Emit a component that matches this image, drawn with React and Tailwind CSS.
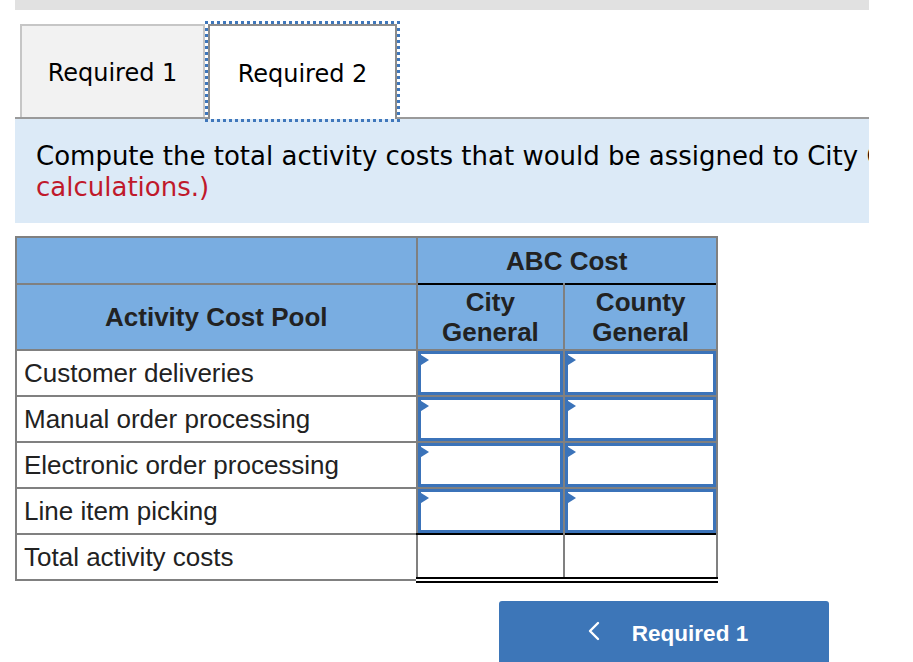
import React from 'react';

const rows = [
  'Customer deliveries',
  'Manual order processing',
  'Electronic order processing',
  'Line item picking',
];

const verdana = { fontFamily: '"DejaVu Sans", Verdana, sans-serif' };
const arial = { fontFamily: '"Liberation Sans", Arial, sans-serif' };

function InputCell() {
  return (
    <td className="p-0 border-2 border-[#808080] h-[46px]">
      <div className="relative h-[44px] border-[3px] border-[#3b73b9] bg-white">
        <svg className="absolute -left-[3px] -top-[1px]" width="11" height="14" viewBox="0 0 11 14">
          <polygon points="0,0 11,7 0,14" fill="#3b73b9" />
        </svg>
      </div>
    </td>
  );
}

export default function App() {
  return (
    <div className="w-[913px] h-[662px] overflow-hidden bg-white">
      <div className="ml-[15px] w-[854px]">
        {/* top bar */}
        <div className="h-[10px] bg-[#e1e1e1]" />

        {/* tabs */}
        <div className="flex items-end h-[109px] border-b-2 border-[#9a9a9a]" style={verdana}>
          <div className="ml-[5px] w-[185px] h-[93px] pt-[3px] bg-[#f2f2f2] border-2 border-b-0 border-[#c6c6c6] flex items-center justify-center text-[24px] text-black">
            Required 1
          </div>
          <div className="ml-[3px] -mb-[2px] w-[189px] h-[95px] pt-[3px] bg-white border-2 border-b-0 border-[#8c8c8c] outline-[3px] outline-dotted outline-[#3f77bb] flex items-center justify-center text-[24px] text-black">
            Required 2
          </div>
        </div>

        {/* instructions */}
        <div className="h-[104px] bg-[#dceaf7] overflow-hidden pl-[21px] pt-[22px]" style={verdana}>
          <p className="w-[1400px] whitespace-nowrap text-[26px] leading-[31px] text-black">
            Compute the total activity costs that would be assigned to City General and County General.{' '}
            <span className="text-[#c0192b]">(Do not round intermediate</span>
            <br />
            <span className="text-[#c0192b]">calculations.)</span>
          </p>
        </div>

        {/* table */}
        <table className="mt-[13px] border-collapse w-[703px] text-[26px] text-[#222]" style={arial}>
          <colgroup>
            <col className="w-[402px]" />
            <col className="w-[148px]" />
            <col className="w-[153px]" />
          </colgroup>
          <thead>
            <tr className="h-[47px] bg-[#79ade1]">
              <th className="border-2 border-[#808080]" />
              <th colSpan={2} className="border-2 border-b-0 border-[#808080] font-bold text-center leading-[28px] pt-[1px]">
                ABC Cost
              </th>
            </tr>
            <tr className="h-[66px] bg-[#79ade1]">
              <th className="border-2 border-[#808080] font-bold text-center">Activity Cost Pool</th>
              <th className="border-2 border-[#808080] border-t-black border-t-[2px] font-bold text-center leading-[30px]">
                City<br />General
              </th>
              <th className="border-2 border-[#808080] border-t-black border-t-[2px] font-bold text-center leading-[30px]">
                County<br />General
              </th>
            </tr>
          </thead>
          <tbody>
            {rows.map((r) => (
              <tr key={r} className="h-[46px]">
                <td className="border-2 border-[#808080] pl-[7px] pt-[1px]">{r}</td>
                <InputCell />
                <InputCell />
              </tr>
            ))}
            <tr className="h-[46px]">
              <td className="border-2 border-[#808080] pl-[7px] pt-[1px]">Total activity costs</td>
              <td className="border-2 border-[#808080] border-t-black border-b-[6px] border-b-black border-double" />
              <td className="border-2 border-[#808080] border-t-black border-b-[6px] border-b-black border-double" />
            </tr>
          </tbody>
        </table>

        {/* nav button */}
        <div className="mt-[18px] pl-[484px] flex">
          <button
            className="w-[330px] h-[70px] bg-[#3d76b8] rounded-t-[3px] flex items-start justify-center pt-[16px] pl-[8px] text-white text-[22.5px] font-bold"
            style={arial}
          >
            <svg className="mt-[4px] mr-[32px]" width="12" height="20" viewBox="0 0 12 20">
              <polyline points="10,2 2,10 10,18" fill="none" stroke="white" strokeWidth="2.4" strokeLinecap="round" strokeLinejoin="round" />
            </svg>
            <span>Required 1</span>
          </button>
        </div>
      </div>
    </div>
  );
}
